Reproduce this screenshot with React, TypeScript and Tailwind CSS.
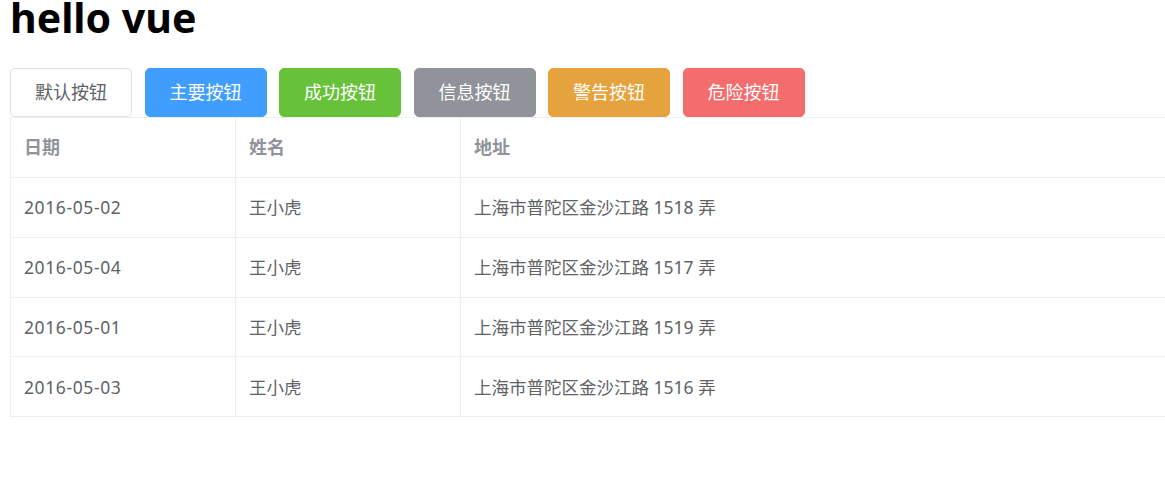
import React from "react";

const buttons = [
  { label: "默认按钮", cls: "bg-white border-[#DCDFE6] text-[#606266]" },
  { label: "主要按钮", cls: "bg-[#409EFF] border-[#409EFF] text-white" },
  { label: "成功按钮", cls: "bg-[#67C23A] border-[#67C23A] text-white" },
  { label: "信息按钮", cls: "bg-[#909399] border-[#909399] text-white" },
  { label: "警告按钮", cls: "bg-[#E6A23C] border-[#E6A23C] text-white" },
  { label: "危险按钮", cls: "bg-[#F56C6C] border-[#F56C6C] text-white" },
];

const rows = [
  { date: "2016-05-02", name: "王小虎", address: "上海市普陀区金沙江路 1518 弄" },
  { date: "2016-05-04", name: "王小虎", address: "上海市普陀区金沙江路 1517 弄" },
  { date: "2016-05-01", name: "王小虎", address: "上海市普陀区金沙江路 1519 弄" },
  { date: "2016-05-03", name: "王小虎", address: "上海市普陀区金沙江路 1516 弄" },
];

export default function App() {
  return (
    <div
      className="w-screen min-h-screen overflow-hidden bg-white pl-[10px]"
      style={{ fontFamily: '"Noto Sans", "Noto Sans CJK SC", sans-serif' }}
    >
      <h1 className="text-[41px] leading-[40px] font-bold text-black mt-[-3px] mb-[31px]">
        hello vue
      </h1>
      <div className="flex gap-[12.5px]">
        {buttons.map((b) => (
          <div
            key={b.label}
            className={`w-[122px] h-[49px] flex items-center justify-center border rounded-[5px] text-[18px] ${b.cls}`}
          >
            {b.label}
          </div>
        ))}
      </div>
      <div className="w-[1300px] border-t border-l border-[#EBEEF5] text-[17.5px]">
        <div className="grid grid-cols-[225px_225px_1fr] h-[60px] border-b border-[#EBEEF5] text-[#909399] font-bold text-[18px]">
          <div className="flex items-center px-[13px] border-r border-[#EBEEF5]">日期</div>
          <div className="flex items-center px-[13px] border-r border-[#EBEEF5]">姓名</div>
          <div className="flex items-center px-[13px]">地址</div>
        </div>
        {rows.map((r) => (
          <div
            key={r.date}
            className="grid grid-cols-[225px_225px_1fr] h-[59.75px] border-b border-[#EBEEF5] text-[#606266]"
          >
            <div className="flex items-center px-[13px] border-r border-[#EBEEF5] tracking-[0.6px]">{r.date}</div>
            <div className="flex items-center px-[13px] border-r border-[#EBEEF5]">{r.name}</div>
            <div className="flex items-center px-[13px]">{r.address}</div>
          </div>
        ))}
      </div>
    </div>
  );
}
